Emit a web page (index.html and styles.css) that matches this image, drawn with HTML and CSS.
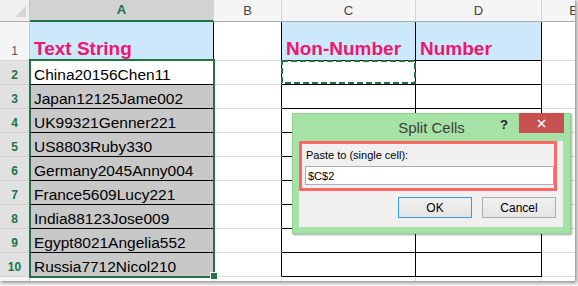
FILE: index.html
```html
<html>
    <head>
        <link rel="stylesheet" href="styles.css">
    </head>
    <body>
    <div class="frame">
        <div class="sheet">
            <div class="corner"><span class="tri"></span></div>
            <div class="ch sel">A</div>
            <div class="ch">B</div>
            <div class="ch">C</div>
            <div class="ch">D</div>
            <div class="ch">E</div>

            <div class="rh">1</div>
            <div class="c blue bk title">Text String</div>
            <div class="c bkr"></div>
            <div class="c blue bk title">Non-Number</div>
            <div class="c blue bk title">Number</div>
            <div class="c"></div>

            <div class="rh sel">2</div>
            <div class="c bk">China20156Chen11</div>
            <div class="c bkr"></div>
            <div class="c bk"></div>
            <div class="c bk"></div>
            <div class="c"></div>

            <div class="rh sel">3</div>
            <div class="c bk gray">Japan12125Jame002</div>
            <div class="c bkr"></div>
            <div class="c bk"></div>
            <div class="c bk"></div>
            <div class="c"></div>

            <div class="rh sel">4</div>
            <div class="c bk gray">UK99321Genner221</div>
            <div class="c bkr"></div>
            <div class="c bk"></div>
            <div class="c bk"></div>
            <div class="c"></div>

            <div class="rh sel">5</div>
            <div class="c bk gray">US8803Ruby330</div>
            <div class="c bkr"></div>
            <div class="c bk"></div>
            <div class="c bk"></div>
            <div class="c"></div>

            <div class="rh sel">6</div>
            <div class="c bk gray">Germany2045Anny004</div>
            <div class="c bkr"></div>
            <div class="c bk"></div>
            <div class="c bk"></div>
            <div class="c"></div>

            <div class="rh sel">7</div>
            <div class="c bk gray">France5609Lucy221</div>
            <div class="c bkr"></div>
            <div class="c bk"></div>
            <div class="c bk"></div>
            <div class="c"></div>

            <div class="rh sel">8</div>
            <div class="c bk gray">India88123Jose009</div>
            <div class="c bkr"></div>
            <div class="c bk"></div>
            <div class="c bk"></div>
            <div class="c"></div>

            <div class="rh sel">9</div>
            <div class="c bk gray">Egypt8021Angelia552</div>
            <div class="c bkr"></div>
            <div class="c bk"></div>
            <div class="c bk"></div>
            <div class="c"></div>

            <div class="rh sel">10</div>
            <div class="c bk gray">Russia7712Nicol210</div>
            <div class="c bkr"></div>
            <div class="c bk"></div>
            <div class="c bk"></div>
            <div class="c"></div>

            <div class="rh"></div>
            <div class="c"></div>
            <div class="c"></div>
            <div class="c"></div>
            <div class="c"></div>
            <div class="c"></div>
        </div>

        <!-- selection box on A2:A10 and copy marquee on C2 -->
        <div class="selection"></div>
        <div class="handle"></div>
        <svg class="marquee" width="135" height="24">
            <rect x="1" y="1" width="133" height="22" fill="none" stroke="#217346" stroke-width="2" stroke-dasharray="6 3"/>
        </svg>

        <div class="dialog">
            <div class="titlebar">
                <span></span>
                <span class="dtitle">Split Cells</span>
                <div class="tools">
                    <span class="help">?</span>
                    <span class="close">
                        <svg width="9" height="9"><path d="M1 1L8 8M8 1L1 8" stroke="#fff" stroke-width="1.6"/></svg>
                    </span>
                </div>
            </div>
            <div class="panel">
                <div class="group">
                    <div class="label">Paste to (single cell):</div>
                    <input class="field" type="text" value="$C$2" readonly>
                </div>
                <div class="buttons">
                    <button class="btn def">OK</button>
                    <button class="btn">Cancel</button>
                </div>
            </div>
        </div>
    </div>
    </body>
</html>
```

FILE: styles.css
```css
body {
    margin: 0;
    background: #fff;
}
.frame {
    position: relative;
    width: 575px;
    height: 281px;
    overflow: hidden;
    box-shadow: 1px 1px 4px 1px rgba(0, 0, 0, 0.45);
    font-family: "Liberation Sans", Arial, sans-serif;
}
.sheet {
    display: grid;
    grid-template-columns: 30px 184px 68px 134px 126px 64px;
    grid-template-rows: 22px 39px repeat(9, 24px) 24px;
}
.sheet > div {
    box-sizing: border-box;
    border-right: 1px solid #d9d9d9;
    border-bottom: 1px solid #d9d9d9;
}
.sheet .corner {
    background: #f0f0f0;
    display: flex;
    justify-content: flex-end;
    align-items: flex-end;
    padding: 0 3px 4px 0;
    border-right-color: #c6c6c6;
    border-bottom-color: #ababab;
}
.tri {
    width: 0;
    height: 0;
    border-left: 11px solid transparent;
    border-bottom: 11px solid #d6d6d6;
}
.sheet .ch {
    background: #f5f5f5;
    color: #444;
    font-size: 13px;
    text-align: center;
    line-height: 21px;
    border-bottom-color: #ababab;
    border-right-color: #d4d4d4;
}
.sheet .ch.sel {
    background: #d2d2d2;
    color: #217346;
    font-weight: bold;
    border-bottom: 2px solid #217346;
    line-height: 20px;
}
.sheet .rh {
    background: #f5f5f5;
    color: #555;
    font-size: 12px;
    display: flex;
    justify-content: center;
    align-items: flex-end;
    line-height: 18px;
    border-right-color: #c6c6c6;
    border-bottom-color: #d4d4d4;
}
.sheet .rh.sel {
    background: #e1e1e1;
    color: #217346;
    font-weight: bold;
}
.c {
    display: flex;
    align-items: flex-end;
    padding-left: 4px;
    font-size: 15.5px;
    line-height: 18px;
    color: #000;
    white-space: nowrap;
}
.c.title {
    color: #f0156d;
    font-weight: bold;
    font-size: 19px;
    line-height: 22px;
}
.blue {
    background: #cce9fc;
}
.gray {
    background: #c8c8c8;
}
.sheet .bk {
    border-right-color: #000;
    border-bottom-color: #000;
}
.sheet .bkr {
    border-right-color: #000;
}
.selection {
    position: absolute;
    left: 29px;
    top: 59px;
    width: 186px;
    height: 219px;
    box-sizing: border-box;
    border: 2px solid #217346;
}
.handle {
    position: absolute;
    left: 210px;
    top: 272px;
    width: 6px;
    height: 6px;
    background: #217346;
    border: 1px solid #fff;
}
.marquee {
    position: absolute;
    left: 281px;
    top: 60px;
}
.dialog {
    position: absolute;
    left: 292px;
    top: 113px;
    width: 279px;
    height: 121px;
    background: #a6e2a6;
    box-shadow: inset 0 0 0 1px #90d090, 1px 1px 2px rgba(0, 0, 0, 0.35);
    display: flex;
    flex-direction: column;
}
.titlebar {
    height: 28px;
    display: grid;
    grid-template-columns: 1fr auto 1fr;
    align-items: center;
}
.dtitle {
    font-size: 15px;
    color: #3c3c3c;
}
.tools {
    justify-self: end;
    align-self: start;
    display: flex;
    gap: 11px;
    padding-right: 7px;
}
.help {
    font-weight: bold;
    font-size: 13px;
    line-height: 15px;
    color: #222;
    margin-top: 4px;
}
.close {
    width: 45px;
    height: 20px;
    background: #c75050;
    display: flex;
    align-items: center;
    justify-content: center;
}
.panel {
    margin: 0 8px 7px 7px;
    flex: 1;
    background: #f0f0f0;
    display: flex;
    flex-direction: column;
}
.group {
    width: 258px;
    height: 50px;
    box-sizing: border-box;
    border: 3px solid #ff6666;
    padding: 4px 0 0 3px;
}
.label {
    font-size: 11px;
    line-height: 15px;
    color: #000;
    padding-left: 1px;
}
.field {
    display: block;
    margin: 3px 0 0 0;
    width: 249px;
    height: 19px;
    box-sizing: border-box;
    border: 1px solid #abadb3;
    background: #fff;
    font-family: "Liberation Sans", Arial, sans-serif;
    font-size: 11px;
    color: #000;
    padding: 0 0 0 2px;
    outline: none;
}
.buttons {
    display: flex;
    justify-content: flex-end;
    gap: 10px;
    margin-top: 6px;
    padding-right: 7px;
}
.btn {
    width: 74px;
    height: 21px;
    box-sizing: border-box;
    border: 1px solid #adadad;
    background: linear-gradient(#f0f0f0, #e5e5e5);
    font-family: "Liberation Sans", Arial, sans-serif;
    font-size: 12px;
    color: #000;
    padding: 0;
}
.btn.def {
    border-color: #3c9be8;
}
```
